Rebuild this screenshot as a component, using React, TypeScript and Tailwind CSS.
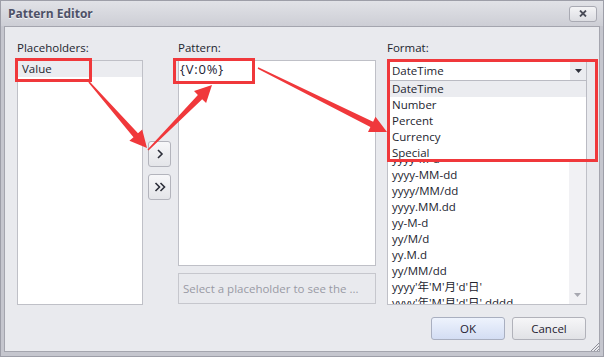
import React from 'react';

// tapered arrow polygon from (x1,y1) to (x2,y2)
function arrowPoints(x1: number, y1: number, x2: number, y2: number, tail = 1.5, shaft = 6, headLen = 17, headW = 17) {
  const dx = x2 - x1;
  const dy = y2 - y1;
  const len = Math.hypot(dx, dy);
  const ux = dx / len;
  const uy = dy / len;
  const nx = -uy;
  const ny = ux;
  const bx = x2 - ux * headLen;
  const by = y2 - uy * headLen;
  const pts = [
    [x1 + (nx * tail) / 2, y1 + (ny * tail) / 2],
    [bx + (nx * shaft) / 2, by + (ny * shaft) / 2],
    [bx + (nx * headW) / 2, by + (ny * headW) / 2],
    [x2, y2],
    [bx - (nx * headW) / 2, by - (ny * headW) / 2],
    [bx - (nx * shaft) / 2, by - (ny * shaft) / 2],
    [x1 - (nx * tail) / 2, y1 - (ny * tail) / 2],
  ];
  return pts.map((p) => p.map((v) => v.toFixed(1)).join(',')).join(' ');
}

const FORMAT_TYPES = ['DateTime', 'Number', 'Percent', 'Currency', 'Special'];

// rows under the open dropdown are hidden, only these show
const DATE_FORMATS = [
  'yyyy-M-d',
  'yyyy-MM-dd',
  'yyyy/MM/dd',
  'yyyy.MM.dd',
  'yy-M-d',
  'yy/M/d',
  'yy.M.d',
  'yy/MM/dd',
  "yyyy'年'M'月'd'日'",
  "yyyy'年'M'月'd'日' dddd",
];

function SideButton({ double }: { double?: boolean }) {
  return (
    <button className="w-[23px] h-[26px] flex items-center justify-center rounded-[3px] border border-[#b3b4bc] bg-linear-to-b from-[#f7f7f9] to-[#e4e5e9]">
      {double ? (
        <svg width="12" height="10" viewBox="0 0 12 10">
          <path d="M1.5 1 L5.5 5 L1.5 9 M6.5 1 L10.5 5 L6.5 9" fill="none" stroke="#2d2f3a" strokeWidth="1.6" />
        </svg>
      ) : (
        <svg width="8" height="10" viewBox="0 0 8 10">
          <path d="M2 1 L6 5 L2 9" fill="none" stroke="#2d2f3a" strokeWidth="1.6" />
        </svg>
      )}
    </button>
  );
}

export default function App() {
  return (
    <div className="relative w-[604px] h-[357px] flex flex-col bg-[#c5c6ce] border border-[#9d9ea8] text-[11.5px] text-[#23252f] font-['Open_Sans','Noto_Sans_CJK_SC',sans-serif] overflow-hidden">
      {/* title bar */}
      <div className="h-[25px] shrink-0 flex items-center justify-between pl-[7px] pr-[6px] bg-linear-to-b from-[#e1e2e7] to-[#cdced5]">
        <span className="font-bold text-[12px] text-[#4d5167] [text-shadow:0_1px_0_#f4f4f6]">Pattern Editor</span>
        <button className="w-[28px] h-[16px] flex items-center justify-center rounded-[3px] border border-[#a9aab3] bg-linear-to-b from-[#f4f4f6] to-[#dcdde2]">
          <svg width="8" height="7" viewBox="0 0 8 7">
            <path d="M1 0.5 L7 6.5 M7 0.5 L1 6.5" stroke="#4a4c58" strokeWidth="1.8" />
          </svg>
        </button>
      </div>

      {/* client */}
      <div className="flex-1 mx-[3px] mb-[4px] border border-[#a4a5ae] bg-[#e9eaee] flex flex-col">
        <div className="flex pt-[13px] pl-[12px]">
          {/* placeholders */}
          <div className="w-[126px] flex flex-col">
            <div className="h-[16px] leading-[16px] mb-[4px]">Placeholders:</div>
            <div className="h-[245px] border border-[#bfc0c7] bg-white">
              <div className="h-[16px] leading-[16px] pl-[4px] bg-[#ebecf0]">Value</div>
            </div>
          </div>

          {/* move buttons */}
          <div className="ml-[5px] w-[23px] pt-[101px] flex flex-col gap-[7px]">
            <SideButton />
            <SideButton double />
          </div>

          {/* pattern */}
          <div className="ml-[7px] w-[198px] flex flex-col">
            <div className="h-[16px] leading-[16px] mb-[4px]">Pattern:</div>
            <div className="h-[206px] border border-[#bfc0c7] bg-white px-[1px]">
              <div className="h-[17px] leading-[17px] text-[13px] tracking-[0.8px] text-[#1d2233]">{'{V:0%}'}</div>
            </div>
            <div className="mt-[7px] h-[31px] border border-[#c6c7cd] px-[4px] flex items-center text-[#999aa5] whitespace-nowrap overflow-hidden">
              Select a placeholder to see the ...
            </div>
          </div>

          {/* format */}
          <div className="ml-[11px] w-[200px] flex flex-col">
            <div className="h-[16px] leading-[16px] mb-[4px]">Format:</div>
            <div className="relative">
              <div className="h-[21px] border border-[#bfc0c7] bg-white flex">
                <div className="flex-1 pl-[4px] leading-[19px]">DateTime</div>
                <div className="w-[16px] bg-[#ebecf0] flex items-center justify-center">
                  <svg width="7" height="4" viewBox="0 0 7 4">
                    <path d="M0 0 H7 L3.5 4 Z" fill="#2f313c" />
                  </svg>
                </div>
              </div>
              <div className="h-[224px] border border-t-0 border-[#bfc0c7] bg-white flex">
                <div className="flex-1 overflow-hidden pt-[70px]">
                  {DATE_FORMATS.map((f) => (
                    <div key={f} className="h-[16px] leading-[16px] pl-[4px] whitespace-nowrap">
                      {f}
                    </div>
                  ))}
                </div>
                <div className="w-[17px] bg-[#f1f1f4] flex flex-col justify-end items-center pb-[7px]">
                  <svg width="7" height="4" viewBox="0 0 7 4">
                    <path d="M0 0 H7 L3.5 4 Z" fill="#a7a8b0" />
                  </svg>
                </div>
              </div>

              {/* open dropdown */}
              <div className="absolute left-0 top-[20px] w-[200px] border border-[#babbc3] bg-white">
                {FORMAT_TYPES.map((t, i) => (
                  <div
                    key={t}
                    className={`h-[16px] leading-[16px] pl-[4px] ${i === 0 ? 'bg-[#ebecf0]' : ''}`}
                  >
                    {t}
                  </div>
                ))}
              </div>
            </div>
          </div>
        </div>

        {/* dialog buttons */}
        <div className="mt-[12px] flex justify-end gap-[7px] pr-[13px]">
          <button className="w-[74px] h-[23px] rounded-[3px] border border-[#a9afc0] bg-linear-to-b from-[#eef3fd] to-[#d3ddf3] text-[#1f2130]">
            OK
          </button>
          <button className="w-[74px] h-[23px] rounded-[3px] border border-[#b1b2ba] bg-linear-to-b from-[#f6f6f8] to-[#e1e2e6] text-[#1f2130]">
            Cancel
          </button>
        </div>
      </div>

      {/* resize grip */}
      <svg className="absolute right-[3px] bottom-[4px]" width="11" height="11" viewBox="0 0 11 11">
        <path d="M10 2 L2 10 M10 5 L5 10 M10 8 L8 10" stroke="#8e8f99" strokeWidth="1" />
      </svg>

      {/* red annotations */}
      <div className="absolute left-[14px] top-[57px] w-[77px] h-[24px] border-[3px] border-[#f0383b] pointer-events-none" />
      <div className="absolute left-[172px] top-[57px] w-[82px] h-[26px] border-[3px] border-[#f0383b] pointer-events-none" />
      <div className="absolute left-[386px] top-[58px] w-[211px] h-[103px] border-[3px] border-[#f0383b] pointer-events-none" />
      <svg className="absolute left-0 top-0 pointer-events-none" width="604" height="357">
        <polygon points={arrowPoints(88, 81, 146, 147)} fill="#f0383b" />
        <polygon points={arrowPoints(147, 149, 211, 84)} fill="#f0383b" />
        <polygon points={arrowPoints(257, 67, 386, 131)} fill="#f0383b" />
      </svg>
    </div>
  );
}
